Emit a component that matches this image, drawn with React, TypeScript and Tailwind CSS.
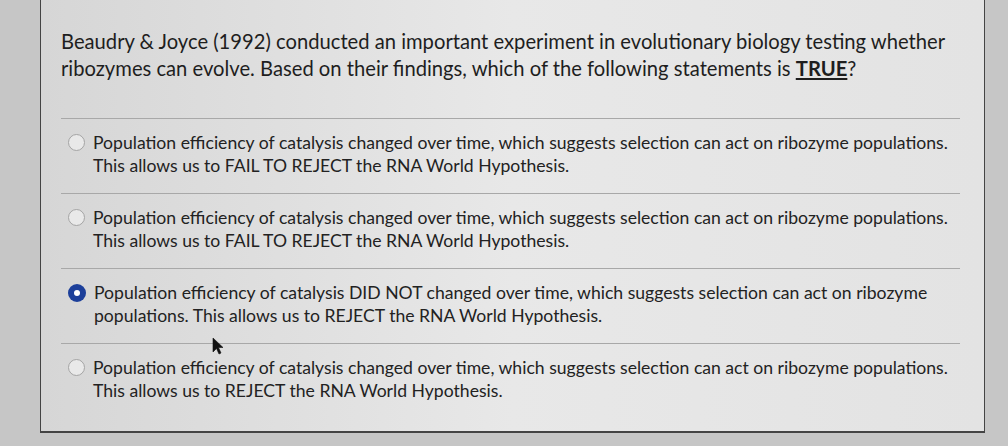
import React from 'react'

const options = [
  {
    text: 'Population efficiency of catalysis changed over time, which suggests selection can act on ribozyme populations. This allows us to FAIL TO REJECT the RNA World Hypothesis.',
    checked: false,
  },
  {
    text: 'Population efficiency of catalysis changed over time, which suggests selection can act on ribozyme populations. This allows us to FAIL TO REJECT the RNA World Hypothesis.',
    checked: false,
  },
  {
    text: 'Population efficiency of catalysis DID NOT changed over time, which suggests selection can act on ribozyme populations. This allows us to REJECT the RNA World Hypothesis.',
    checked: true,
  },
  {
    text: 'Population efficiency of catalysis changed over time, which suggests selection can act on ribozyme populations. This allows us to REJECT the RNA World Hypothesis.',
    checked: false,
  },
]

function Radio({ checked }: { checked: boolean }) {
  if (checked) {
    return (
      <span className="mt-[3px] flex h-[18px] w-[18px] shrink-0 items-center justify-center rounded-full bg-[#1c3f9a]">
        <span className="h-[6px] w-[6px] rounded-full bg-white" />
      </span>
    )
  }
  return <span className="mt-[3px] h-[17px] w-[17px] shrink-0 rounded-full border border-[#a4a4a4] bg-[#e9e9e9]" />
}

export default function App() {
  return (
    <div
      className="relative h-[446px] w-[1008px] overflow-hidden bg-[#c6c6c6] pl-[40px] pr-[23px]"
      style={{ fontFamily: 'Lato, "Open Sans", sans-serif' }}
    >
      <div className="h-[433px] border-r border-b-2 border-l border-[#444] bg-gradient-to-r from-[#d6d6d6] via-[#e8e8e8] to-[#e3e3e3] pr-[24px] pl-[20px] pt-[28px]">
        <p className="text-[20.2px] leading-[27px] text-[#1e1e1e]">
          <span className="whitespace-nowrap">
            Beaudry &amp; Joyce (1992) conducted an important experiment in evolutionary biology testing whether
          </span>
          <br />
          ribozymes can evolve. Based on their findings, which of the following statements is{' '}
          <span className="font-bold underline underline-offset-2">TRUE</span>?
        </p>

        <div className="mt-[36px] border-t border-[#a8a8a8]">
          {options.map((o, i) => (
            <div
              key={i}
              className={`flex gap-[8px] pl-[7px] pt-[12px] ${i < 3 ? 'h-[75px] border-b border-[#a8a8a8]' : ''}`}
            >
              <Radio checked={o.checked} />
              <p className="w-[864px] text-[17.6px] leading-[23px] text-[#222]">{o.text}</p>
            </div>
          ))}
        </div>
      </div>

      <svg className="absolute left-[212px] top-[337px]" width="12" height="18" viewBox="0 0 12 18">
        <path d="M1 1 L1 15 L4.5 11.5 L7 17 L9 16 L6.5 10.5 L11 10.5 Z" fill="#111" stroke="#111" strokeWidth="0.6" />
      </svg>
    </div>
  )
}
